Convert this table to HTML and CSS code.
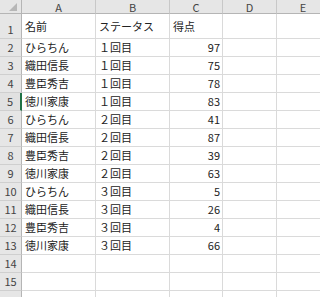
FILE: index.html
```html
<!DOCTYPE html>
<html lang="ja">
<head>
<meta charset="utf-8">
<link rel="stylesheet" href="styles.css">
</head>
<body>
<div class="sheet">
  <div class="hd corner"><span class="tri"></span></div>
  <div class="hd col">A</div>
  <div class="hd col">B</div>
  <div class="hd col">C</div>
  <div class="hd col">D</div>
  <div class="hd col">E</div>

  <div class="rh r1">1</div><div class="c r1">名前</div><div class="c r1">ステータス</div><div class="c r1">得点</div><div class="c r1"></div><div class="c r1"></div>
  <div class="rh">2</div><div class="c">ひらちん</div><div class="c">１回目</div><div class="c n">97</div><div class="c"></div><div class="c"></div>
  <div class="rh">3</div><div class="c">織田信長</div><div class="c">１回目</div><div class="c n">75</div><div class="c"></div><div class="c"></div>
  <div class="rh">4</div><div class="c">豊臣秀吉</div><div class="c">１回目</div><div class="c n">78</div><div class="c"></div><div class="c"></div>
  <div class="rh sel">5</div><div class="c">徳川家康</div><div class="c">１回目</div><div class="c n">83</div><div class="c"></div><div class="c"></div>
  <div class="rh">6</div><div class="c">ひらちん</div><div class="c">２回目</div><div class="c n">41</div><div class="c"></div><div class="c"></div>
  <div class="rh">7</div><div class="c">織田信長</div><div class="c">２回目</div><div class="c n">87</div><div class="c"></div><div class="c"></div>
  <div class="rh">8</div><div class="c">豊臣秀吉</div><div class="c">２回目</div><div class="c n">39</div><div class="c"></div><div class="c"></div>
  <div class="rh">9</div><div class="c">徳川家康</div><div class="c">２回目</div><div class="c n">63</div><div class="c"></div><div class="c"></div>
  <div class="rh">10</div><div class="c">ひらちん</div><div class="c">３回目</div><div class="c n">5</div><div class="c"></div><div class="c"></div>
  <div class="rh">11</div><div class="c">織田信長</div><div class="c">３回目</div><div class="c n">26</div><div class="c"></div><div class="c"></div>
  <div class="rh">12</div><div class="c">豊臣秀吉</div><div class="c">３回目</div><div class="c n">4</div><div class="c"></div><div class="c"></div>
  <div class="rh">13</div><div class="c">徳川家康</div><div class="c">３回目</div><div class="c n">66</div><div class="c"></div><div class="c"></div>
  <div class="rh">14</div><div class="c"></div><div class="c"></div><div class="c"></div><div class="c"></div><div class="c"></div>
  <div class="rh">15</div><div class="c"></div><div class="c"></div><div class="c"></div><div class="c"></div><div class="c"></div>
  <div class="rh"></div><div class="c"></div><div class="c"></div><div class="c"></div><div class="c"></div><div class="c"></div>
</div>
</body>
</html>
```

FILE: styles.css
```css
html, body {
  margin: 0;
  padding: 0;
  background: #ffffff;
  overflow: hidden;
}
.sheet {
  display: grid;
  grid-template-columns: 22px 74px 74px 53px 54px 53px;
  grid-template-rows: 14px 25px;
  grid-auto-rows: 18px;
  width: 330px;
  font-family: "Noto Sans CJK JP", "Noto Sans", sans-serif;
  font-size: 11px;
  color: #222;
}
.hd {
  background: #e6e6e6;
  border-bottom: 1px solid #b5b5b5;
  border-right: 1px solid #c8c8c8;
  box-sizing: border-box;
}
.col {
  display: flex;
  align-items: center;
  justify-content: center;
  color: #444;
  font-size: 11px;
  line-height: 1;
  padding-top: 1px;
}
.corner {
  position: relative;
  border-right: 1px solid #b5b5b5;
}
.tri {
  position: absolute;
  right: 4px;
  bottom: 2px;
  width: 0;
  height: 0;
  border-left: 8px solid transparent;
  border-bottom: 8px solid #b7b7b7;
}
.rh {
  background: #e6e6e6;
  color: #444;
  border-right: 1px solid #b5b5b5;
  border-bottom: 1px solid #cfcfcf;
  box-sizing: border-box;
  display: flex;
  align-items: flex-end;
  justify-content: center;
  line-height: 1;
  padding-bottom: 3px;
  font-size: 11px;
}
.rh.sel {
  background: #e1e1e1;
  border-right: 2px solid #217346;
}
.c {
  border-right: 1px solid #dadada;
  border-bottom: 1px solid #dadada;
  box-sizing: border-box;
  display: flex;
  align-items: flex-end;
  padding: 0 2px 3px 3px;
  line-height: 1;
  white-space: nowrap;
  overflow: hidden;
}
.c.n {
  justify-content: flex-end;
}
.r1 {
  padding-bottom: 6px;
}
.rh.r1 {
  padding-bottom: 3px;
}
```
